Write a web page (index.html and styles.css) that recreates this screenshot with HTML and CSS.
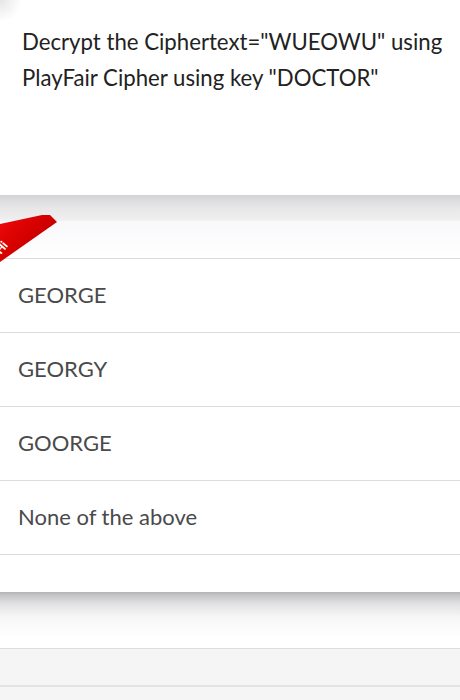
FILE: index.html
```html
<!DOCTYPE html>
<html>
<head>
<meta charset="utf-8">
<link rel="stylesheet" href="styles.css">
</head>
<body>
<div class="page">
  <div class="question">
    <p class="q-text">Decrypt the Ciphertext="WUEOWU" using PlayFair Cipher using key "DOCTOR"</p>
  </div>
  <div class="shade-top"></div>
  <div class="card">
    <div class="ribbon"><span class="ribbon-text">Hi</span></div>
    <div class="card-head"></div>
    <div class="option">GEORGE</div>
    <div class="option">GEORGY</div>
    <div class="option">GOORGE</div>
    <div class="option">None of the above</div>
    <div class="card-foot"></div>
  </div>
  <div class="shade-bottom"></div>
  <div class="grey-row"></div>
  <div class="grey-row last"></div>
</div>
</body>
</html>
```
FILE: styles.css
```css
html, body {
  margin: 0;
  padding: 0;
  background: #ffffff;
}
.page {
  width: 460px;
  height: 700px;
  overflow: hidden;
  display: flex;
  flex-direction: column;
  font-family: "Lato", "Open Sans", sans-serif;
}
.question {
  height: 195px;
  flex: none;
  padding: 24px 0 0 22px;
  box-sizing: border-box;
  background: radial-gradient(circle at 0 0, #e6e6e6 0, #ffffff 22px);
}
.q-text {
  margin: 0;
  font-size: 22.2px;
  line-height: 36px;
  color: #222222;
}
.shade-top {
  height: 25px;
  flex: none;
  background: linear-gradient(to bottom, #d2d2d4 0, #dcdcde 5px, #e8e8e9 14px, #efeff0 25px);
}
.card {
  position: relative;
  flex: none;
  background: #ffffff;
  border-top: 1px solid #f1f1f4;
}
.card-head {
  height: 37px;
  background: linear-gradient(to bottom, #f8f8fb, #ffffff);
  border-bottom: 1px solid #dcdcdc;
}
.option {
  border-bottom: 1px solid #dcdcdc;
  display: flex;
  align-items: center;
  padding: 0 0 2px 18px;
  box-sizing: border-box;
  height: 74px;
  font-size: 22px;
  color: #4a4a4a;
}
.card-foot {
  height: 37px;
}
.ribbon {
  position: absolute;
  z-index: 2;
  left: 0;
  top: -6px;
  width: 58px;
  height: 48px;
  background: linear-gradient(135deg, #f00a0a 0, #d40000 45%, #a70000 100%);
  clip-path: polygon(0 9px, 42px 0, 50px 0, 57px 7px, 0 47px);
  overflow: hidden;
}
.ribbon-text {
  position: absolute;
  left: -5px;
  top: 25px;
  font-size: 12px;
  font-weight: bold;
  color: #ffffff;
  transform: rotate(-50deg);
}
.shade-bottom {
  height: 56px;
  flex: none;
  background: linear-gradient(to bottom, #b4b4b8 0, #c4c4c7 3px, #e2e2e4 12px, #f6f6f7 25px, #ffffff 45px);
}
.grey-row {
  height: 36px;
  flex: none;
  background: #f5f5f5;
  border-top: 1px solid #dddddd;
}
.grey-row.last {
  flex: 1;
  border-top: 2px solid #e2e2e2;
}
```
